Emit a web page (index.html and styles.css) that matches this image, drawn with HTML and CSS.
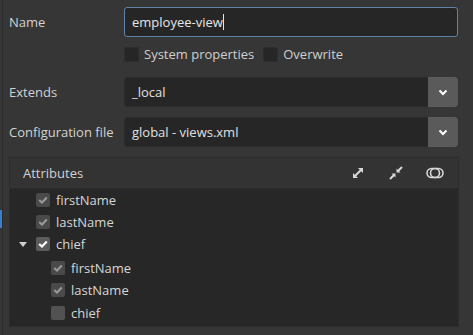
FILE: index.html
```html
<!DOCTYPE html>
<html>
<head>
<meta charset="utf-8">
<link rel="stylesheet" href="styles.css">
</head>
<body>
<div class="window">
  <div class="edge"><div class="edge-mark"></div></div>
  <div class="main">
    <div class="row">
      <div class="label">Name</div>
      <div class="input focused">employee-view<span class="caret"></span></div>
    </div>
    <div class="opts">
      <label class="opt"><span class="box empty"></span>System properties</label>
      <label class="opt"><span class="box empty"></span>Overwrite</label>
    </div>
    <div class="row">
      <div class="label">Extends</div>
      <div class="select">
        <div class="select-text">_local</div>
        <div class="select-btn"><svg width="10" height="7" viewBox="0 0 10 7"><path d="M1.5 1.5 L5 5 L8.5 1.5" fill="none" stroke="#fff" stroke-width="2"/></svg></div>
      </div>
    </div>
    <div class="row">
      <div class="label">Configuration file</div>
      <div class="select">
        <div class="select-text">global - views.xml</div>
        <div class="select-btn"><svg width="10" height="7" viewBox="0 0 10 7"><path d="M1.5 1.5 L5 5 L8.5 1.5" fill="none" stroke="#fff" stroke-width="2"/></svg></div>
      </div>
    </div>
    <div class="panel">
      <div class="panel-head">
        <div class="panel-title">Attributes</div>
        <div class="tools">
          <svg class="tool" width="14" height="14" viewBox="0 0 14 14"><path d="M3 11 L11 3" stroke="#d8d8d8" stroke-width="2"/><path d="M7 2 H12 V7 Z" fill="#d8d8d8"/><path d="M2 7 V12 H7 Z" fill="#d8d8d8"/></svg>
          <svg class="tool" width="14" height="14" viewBox="0 0 14 14"><path d="M1 13 L5 9 M13 1 L9 5" stroke="#d8d8d8" stroke-width="2"/><path d="M7.5 6.5 V2.5 L11.5 6.5 Z" fill="#d8d8d8"/><path d="M6.5 7.5 V11.5 L2.5 7.5 Z" fill="#d8d8d8"/></svg>
          <svg class="tool" width="18" height="12" viewBox="0 0 18 12"><rect x="1" y="1.5" width="16" height="9" rx="4.5" fill="none" stroke="#d8d8d8" stroke-width="1.6"/><circle cx="9" cy="6" r="4.5" fill="none" stroke="#d8d8d8" stroke-width="1.6"/></svg>
        </div>
      </div>
      <div class="tree">
        <div class="node l1"><span class="twist"></span><span class="box dis"><svg width="10" height="8" viewBox="0 0 10 8"><path d="M1.2 4 L4 6.5 L8.8 1.5" fill="none" stroke="#9a9a9a" stroke-width="2"/></svg></span>firstName</div>
        <div class="node l1"><span class="twist"></span><span class="box dis"><svg width="10" height="8" viewBox="0 0 10 8"><path d="M1.2 4 L4 6.5 L8.8 1.5" fill="none" stroke="#9a9a9a" stroke-width="2"/></svg></span>lastName</div>
        <div class="node l1"><span class="twist"><svg width="8" height="5" viewBox="0 0 8 5"><path d="M0 0 H8 L4 5 Z" fill="#d0d0d0"/></svg></span><span class="box on"><svg width="10" height="8" viewBox="0 0 10 8"><path d="M1.2 4 L4 6.5 L8.8 1.5" fill="none" stroke="#fff" stroke-width="2.2"/></svg></span>chief</div>
        <div class="children">
          <div class="node l2"><span class="twist"></span><span class="box dis"><svg width="10" height="8" viewBox="0 0 10 8"><path d="M1.2 4 L4 6.5 L8.8 1.5" fill="none" stroke="#9a9a9a" stroke-width="2"/></svg></span>firstName</div>
          <div class="node l2"><span class="twist"></span><span class="box dis"><svg width="10" height="8" viewBox="0 0 10 8"><path d="M1.2 4 L4 6.5 L8.8 1.5" fill="none" stroke="#9a9a9a" stroke-width="2"/></svg></span>lastName</div>
          <div class="node l2"><span class="twist"></span><span class="box off"></span>chief</div>
        </div>
      </div>
    </div>
  </div>
</div>
</body>
</html>
```

FILE: styles.css
```css
html, body {
  margin: 0;
  padding: 0;
  background: #393939;
}
body {
  font-family: "Open Sans", "Noto Sans", sans-serif;
  font-size: 13px;
  color: #d2d2d2;
  width: 473px;
  height: 335px;
  overflow: hidden;
}
.window {
  display: flex;
  height: 335px;
}
.edge {
  width: 3px;
  flex: none;
  background: #363636;
  border-right: 1px solid #2b2b2b;
  box-sizing: border-box;
  padding-top: 210px;
}
.edge-mark {
  width: 2px;
  height: 18px;
  background: #3d7ec9;
}
.main {
  flex: 1;
  background: #363636;
  padding: 7px 0 0 6px;
  display: flex;
  flex-direction: column;
}
.row {
  display: flex;
  align-items: center;
  height: 30px;
}
.label {
  width: 115px;
  flex: none;
}
.input {
  width: 334px;
  height: 30px;
  box-sizing: border-box;
  background: #262626;
  border: 1px solid #2b2b2b;
  border-radius: 3px;
  padding: 0 7px;
  display: flex;
  align-items: center;
  color: #e6e6e6;
}
.input.focused {
  border-color: #6283a8;
}
.caret {
  display: inline-block;
  width: 1px;
  height: 16px;
  background: #e6e6e6;
}
.opts {
  display: flex;
  gap: 9px;
  padding-left: 115px;
  height: 18px;
  margin: 8px 0 14px;
  align-items: center;
}
.opt {
  display: flex;
  align-items: center;
  gap: 5px;
  color: #cfcfcf;
}
.box {
  width: 15px;
  height: 15px;
  box-sizing: border-box;
  border-radius: 2px;
  display: inline-flex;
  align-items: center;
  justify-content: center;
  flex: none;
}
.box.empty {
  background: #262626;
  border: 1px solid #2d2d2d;
}
.select {
  width: 334px;
  height: 30px;
  display: flex;
  border-radius: 3px;
  overflow: hidden;
}
.row + .row {
  margin-top: 10px;
}
.select-text {
  flex: 1;
  background: #262626;
  border: 1px solid #2b2b2b;
  border-right: none;
  border-radius: 3px 0 0 3px;
  display: flex;
  align-items: center;
  padding: 0 7px;
  color: #e0e0e0;
}
.select-btn {
  width: 30px;
  background: #5a5a5a;
  display: flex;
  align-items: center;
  justify-content: center;
  border-radius: 0 3px 3px 0;
}
.panel {
  margin-top: 10px;
  width: 450px;
  height: 170px;
  box-sizing: border-box;
  border: 1px solid #2c2c2c;
  background: #272727;
  display: flex;
  flex-direction: column;
}
.panel-head {
  height: 30px;
  flex: none;
  background: #333333;
  border-bottom: 1px solid #2a2a2a;
  display: flex;
  align-items: center;
  padding: 0 0 0 13px;
}
.panel-title {
  flex: 1;
}
.tools {
  display: flex;
  align-items: center;
}
.tool {
  display: block;
}
.tools .tool:nth-child(1) { margin-right: 24px; }
.tools .tool:nth-child(2) { margin-right: 23px; }
.tools .tool:nth-child(3) { margin-right: 14px; }
.tree {
  margin-top: 0;
}
.children {
  margin-top: 2px;
}
.children .node:last-child {
  margin-top: 1px;
}
.node {
  height: 22px;
  display: flex;
  align-items: center;
  color: #d6d6d6;
}
.node.l1 { padding-left: 9px; }
.node.l2 { padding-left: 24px; }
.twist {
  width: 17px;
  height: 14px;
  display: flex;
  align-items: center;
  flex: none;
}
.node .box { margin-right: 6px; }
.box.dis {
  background: #4a4a4a;
  width: 14px;
  height: 14px;
}
.box.on {
  background: #5b5b5b;
  width: 14px;
  height: 14px;
}
.box.off {
  background: #525252;
  width: 14px;
  height: 14px;
}
```
